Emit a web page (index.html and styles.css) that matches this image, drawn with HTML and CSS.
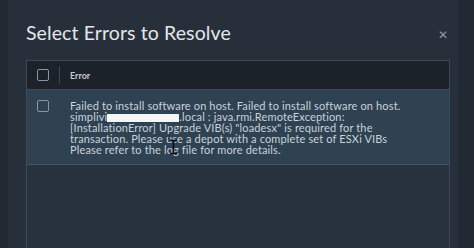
FILE: index.html
```html
<!DOCTYPE html>
<html>
<head>
<meta charset="utf-8">
<link rel="stylesheet" href="styles.css">
</head>
<body>
<div class="modal">
  <div class="modal-header">
    <h1 class="title">Select Errors to Resolve</h1>
    <span class="close">&#x2715;</span>
  </div>
  <div class="grid">
    <div class="grid-head">
      <div class="cell-check"><span class="checkbox"></span></div>
      <div class="sep"></div>
      <div class="head-label">Error</div>
    </div>
    <div class="grid-row">
      <div class="cell-check"><span class="checkbox"></span></div>
      <div class="row-text">Failed to install software on host. Failed to install software on host.<br>simplivi<span class="redact"></span>.local : java.rmi.RemoteException:<br>[InstallationError] Upgrade VIB(s) "loadesx" is required for the<br>transaction. Please use a depot with a complete set of ESXi VIBs<br>Please refer to the log file for more details.</div>
      <svg class="cursor" width="9" height="16" viewBox="0 0 9 16"><path d="M1 1.5h7M1 14.5h7M4.5 1.5v13" stroke="#0b0f14" stroke-width="1.6" fill="none"/></svg>
    </div>
    <div class="grid-empty"></div>
  </div>
</div>
</body>
</html>
```
FILE: styles.css
```css
html, body {
  margin: 0;
  padding: 0;
  background: #212932;
  height: 100%;
}
body {
  font-family: "Lato", "Open Sans", sans-serif;
  overflow: hidden;
}
.modal {
  margin-left: 8px;
  width: 450px;
  height: 248px;
  background: #27303a;
  box-sizing: border-box;
  padding: 16px 0 0 18px;
  display: flex;
  flex-direction: column;
}
.modal-header {
  display: flex;
  align-items: center;
  justify-content: space-between;
  height: 32px;
  margin-bottom: 12px;
  width: 432px;
}
.title {
  margin: 0;
  font-size: 19.5px;
  font-weight: 400;
  color: #e3e7ea;
  letter-spacing: 0.1px;
}
.close {
  color: #8f99a3;
  font-size: 12px;
  margin-right: 10px;
  margin-top: 4px;
}
.grid {
  width: 422px;
  flex: 1;
  border: 1px solid #3d4957;
  border-bottom: none;
  display: flex;
  flex-direction: column;
}
.grid-head {
  height: 28px;
  background: #1c222a;
  display: flex;
  align-items: center;
  border-bottom: 1px solid #3e4c5a;
}
.cell-check {
  width: 32px;
  display: flex;
  justify-content: center;
}
.checkbox {
  display: block;
  width: 10px;
  height: 10px;
  border: 1.5px solid #8a96a2;
  border-radius: 2px;
}
.sep {
  width: 1px;
  height: 18px;
  background: #3c4753;
}
.head-label {
  margin-left: 10px;
  font-size: 9px;
  font-weight: 700;
  color: #c3c9cf;
}
.grid-row {
  position: relative;
  background: #2f4252;
  display: flex;
  align-items: flex-start;
  padding: 10px 0 9px;
  border-bottom: 1px solid #43566a;
}
.row-text {
  margin-left: 11px;
  font-size: 11px;
  line-height: 11px;
  letter-spacing: 0.14px;
  color: #c9d2da;
  white-space: nowrap;
}
.redact {
  display: inline-block;
  width: 72px;
  height: 8px;
  background: #f4f6f7;
  vertical-align: -1px;
}
.cursor {
  position: absolute;
  left: 142px;
  top: 49px;
}
.grid-empty {
  flex: 1;
  background: #28323c;
}
```
